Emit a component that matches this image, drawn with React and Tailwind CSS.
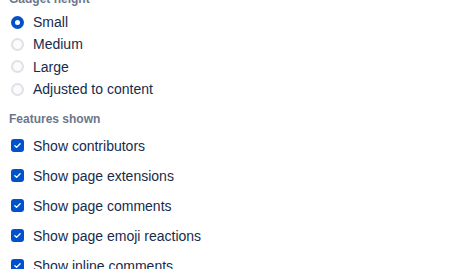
const HEIGHTS = ["Small", "Medium", "Large", "Adjusted to content"];
const FEATURES = [
  "Show contributors",
  "Show page extensions",
  "Show page comments",
  "Show page emoji reactions",
  "Show inline comments",
];

export default function App() {
  return (
    <div className="bg-white w-[474px] h-[269px] overflow-hidden font-['Liberation_Sans',Arial,sans-serif] text-[#172b4d]">
      <div className="-mt-[9px] pl-[9px]">
        <div className="text-[12px] font-bold text-[#6b778c] h-[16px] leading-[16px]">Gadget height</div>
        <div className="flex flex-col pt-[4px]">
          {HEIGHTS.map((h, i) => (
            <label key={h} className="flex items-center h-[22.3px] gap-[9px] pl-[2px]">
              {i === 0 ? (
                <span className="w-[13px] h-[13px] rounded-full bg-[#0052cc] flex items-center justify-center">
                  <span className="w-[5px] h-[5px] rounded-full bg-white" />
                </span>
              ) : (
                <span className="w-[13px] h-[13px] rounded-full border-2 border-[#dfe1e6] bg-[#fafbfc]" />
              )}
              <span className="text-[14px] leading-[20px]">{h}</span>
            </label>
          ))}
        </div>
        <div className="text-[12px] font-bold text-[#6b778c] mt-[11px] h-[16px] leading-[16px]">Features shown</div>
        <div className="flex flex-col pt-[3.5px]">
          {FEATURES.map((f) => (
            <label key={f} className="flex items-center h-[30px] gap-[9px] pl-[2px]">
              <span className="w-[13px] h-[13px] rounded-[3px] bg-[#0052cc] flex items-center justify-center">
                <svg viewBox="0 0 12 12" className="w-[9px] h-[9px]">
                  <path d="M2.5 6.2l2.3 2.3 4.7-4.8" fill="none" stroke="white" strokeWidth="1.8" strokeLinecap="round" strokeLinejoin="round" />
                </svg>
              </span>
              <span className="text-[14px] leading-[20px]">{f}</span>
            </label>
          ))}
        </div>
      </div>
    </div>
  );
}
